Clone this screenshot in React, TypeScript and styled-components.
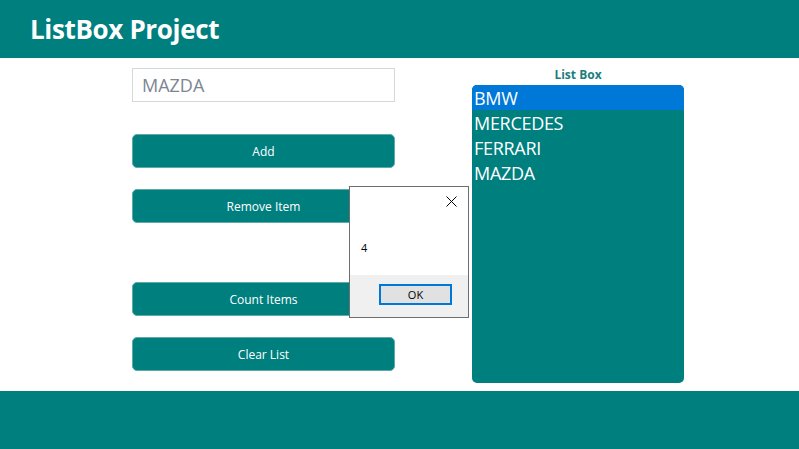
import React from 'react';
import styled, { createGlobalStyle } from 'styled-components';

const teal = '#007f7f';

const GlobalStyle = createGlobalStyle`
  html, body {
    margin: 0;
    padding: 0;
    background: #ffffff;
    font-family: 'Open Sans', 'Noto Sans', sans-serif;
  }
`;

const Page = styled.div`
  position: relative;
  display: flex;
  flex-direction: column;
  width: 799px;
  height: 449px;
  overflow: hidden;
`;

const Header = styled.header`
  display: flex;
  align-items: center;
  height: 58px;
  padding-left: 30px;
  background-color: ${teal};
`;

const Title = styled.h1`
  margin: 0;
  font-size: 26px;
  font-weight: 700;
  letter-spacing: -0.35px;
  color: #ffffff;
`;

const Main = styled.main`
  display: flex;
  height: 333px;
  padding-left: 132px;
  gap: 77px;
`;

const Controls = styled.div`
  display: flex;
  flex-direction: column;
  width: 263px;
  padding-top: 10px;
`;

const TextInput = styled.input`
  box-sizing: border-box;
  width: 263px;
  height: 34px;
  padding: 0 9px;
  border: 1px solid #d3d8dd;
  font-family: 'Open Sans', sans-serif;
  font-size: 18px;
  color: #7d8691;
  outline: none;
`;

const ActionButton = styled.button<{ $top: number }>`
  box-sizing: border-box;
  width: 263px;
  height: 34px;
  margin-top: ${(p) => p.$top}px;
  border: 1px solid #5fa9a9;
  border-radius: 5px;
  background-color: ${teal};
  color: #ffffff;
  font-family: 'Open Sans', sans-serif;
  font-size: 12px;
  cursor: pointer;
`;

const ListColumn = styled.div`
  display: flex;
  flex-direction: column;
  align-items: center;
  width: 212px;
  padding-top: 8px;
`;

const ListLabel = styled.span`
  height: 19px;
  font-size: 12px;
  font-weight: 700;
  color: #1c7d7d;
`;

const ListBox = styled.ul`
  box-sizing: border-box;
  width: 212px;
  height: 298px;
  margin: 0;
  padding: 0;
  list-style: none;
  border-radius: 5px;
  overflow: hidden;
  background-color: ${teal};
`;

const ListItem = styled.li<{ $selected?: boolean }>`
  height: 25px;
  padding-left: 2px;
  line-height: 27px;
  font-size: 18px;
  letter-spacing: -0.3px;
  color: #ffffff;
  background-color: ${(p) => (p.$selected ? '#0078d7' : 'transparent')};
`;

const Footer = styled.footer`
  height: 58px;
  background-color: ${teal};
`;

const Dialog = styled.div`
  position: absolute;
  left: 349px;
  top: 186px;
  box-sizing: border-box;
  display: flex;
  flex-direction: column;
  width: 120px;
  height: 132px;
  border: 1px solid #6e6e6e;
  background: #ffffff;
  font-family: 'Open Sans', sans-serif;
  font-size: 11px;
  color: #000000;
`;

const DialogBody = styled.div`
  position: relative;
  flex: 1;
  padding: 53px 0 0 11px;
`;

const CloseIcon = styled.svg`
  position: absolute;
  top: 9px;
  right: 11px;
`;

const DialogFooter = styled.div`
  display: flex;
  justify-content: flex-end;
  height: 42px;
  padding: 9px 16px 0 0;
  box-sizing: border-box;
  background: #f0f0f0;
`;

const OkButton = styled.button`
  box-sizing: border-box;
  width: 73px;
  height: 21px;
  padding: 0;
  border: 2px solid #0078d7;
  background: #e1e1e1;
  font-family: 'Open Sans', sans-serif;
  font-size: 11px;
  color: #000000;
`;

const cars = ['BMW', 'MERCEDES', 'FERRARI', 'MAZDA'];

const App: React.FC = () => {
  return (
    <Page>
      <GlobalStyle />
      <Header>
        <Title>ListBox Project</Title>
      </Header>
      <Main>
        <Controls>
          <TextInput defaultValue="MAZDA" />
          <ActionButton $top={32}>Add</ActionButton>
          <ActionButton $top={21}>Remove Item</ActionButton>
          <ActionButton $top={59}>Count Items</ActionButton>
          <ActionButton $top={21}>Clear List</ActionButton>
        </Controls>
        <ListColumn>
          <ListLabel>List Box</ListLabel>
          <ListBox>
            {cars.map((car, i) => (
              <ListItem key={car} $selected={i === 0}>
                {car}
              </ListItem>
            ))}
          </ListBox>
        </ListColumn>
      </Main>
      <Footer />
      <Dialog>
        <DialogBody>
          <CloseIcon width="11" height="11" viewBox="0 0 11 11">
            <path d="M0.5 0.5 L10.5 10.5 M10.5 0.5 L0.5 10.5" stroke="#000" strokeWidth="1" />
          </CloseIcon>
          4
        </DialogBody>
        <DialogFooter>
          <OkButton>OK</OkButton>
        </DialogFooter>
      </Dialog>
    </Page>
  );
};

export default App;
